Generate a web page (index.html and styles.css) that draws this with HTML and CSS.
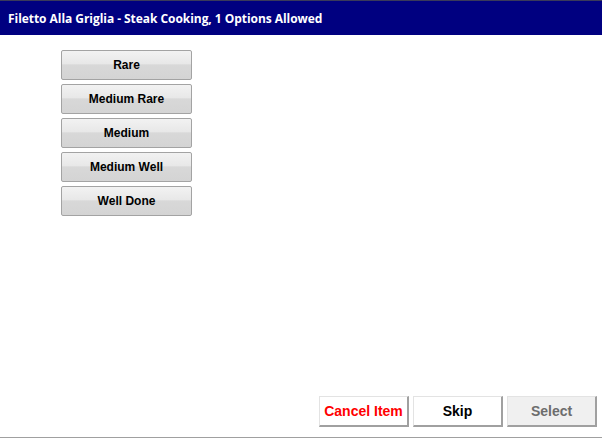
FILE: index.html
```html
<!DOCTYPE html>
<html>
<head>
<meta charset="utf-8">
<link rel="stylesheet" href="styles.css">
</head>
<body>
<div class="page">
  <div class="header">Filetto Alla Griglia - Steak Cooking, 1 Options Allowed</div>
  <div class="options">
    <button class="opt">Rare</button>
    <button class="opt">Medium Rare</button>
    <button class="opt">Medium</button>
    <button class="opt">Medium Well</button>
    <button class="opt">Well Done</button>
  </div>
  <div class="footer">
    <button class="act cancel">Cancel Item</button>
    <button class="act skip">Skip</button>
    <button class="act select">Select</button>
  </div>
</div>
</body>
</html>
```
FILE: styles.css
```css
html, body {
  margin: 0;
  padding: 0;
  background: #ffffff;
}
.page {
  width: 602px;
  height: 438px;
  display: flex;
  flex-direction: column;
  box-sizing: border-box;
}
.header {
  height: 35px;
  box-sizing: border-box;
  background: #000080;
  border-top: 1px solid #3a3a5a;
  color: #ffffff;
  font-family: "Open Sans", "Noto Sans", sans-serif;
  font-weight: bold;
  font-size: 12px;
  letter-spacing: -0.05px;
  display: flex;
  align-items: center;
  padding-left: 8px;
}
.options {
  flex: 1;
  display: flex;
  flex-direction: column;
  gap: 4px;
  padding-top: 15px;
  padding-left: 61px;
}
.opt {
  width: 131px;
  height: 30px;
  margin: 0;
  padding: 0;
  border: 1px solid #a3a3a3;
  border-radius: 2px;
  background: linear-gradient(to bottom, #f2f2f2 0%, #e8e8e8 45%, #d8d8d8 50%, #d4d4d4 100%);
  font-family: "Liberation Sans", Arial, sans-serif;
  font-weight: bold;
  font-size: 12px;
  color: #000000;
}
.footer {
  display: flex;
  justify-content: flex-end;
  gap: 4px;
  padding-right: 5px;
  padding-bottom: 10px;
  border-bottom: 1px solid #a0a0a0;
}
.act {
  width: 90px;
  height: 31px;
  margin: 0;
  padding: 0;
  background: #ffffff;
  border-top: 1px solid #e3e3e3;
  border-left: 1px solid #e3e3e3;
  border-right: 2px solid #a0a0a0;
  border-bottom: 2px solid #a0a0a0;
  font-family: "Liberation Sans", Arial, sans-serif;
  font-weight: bold;
  font-size: 14px;
  color: #000000;
}
.cancel {
  color: #ff0000;
}
.select {
  background: #f0f0f0;
  color: #6d6d6d;
}
```
